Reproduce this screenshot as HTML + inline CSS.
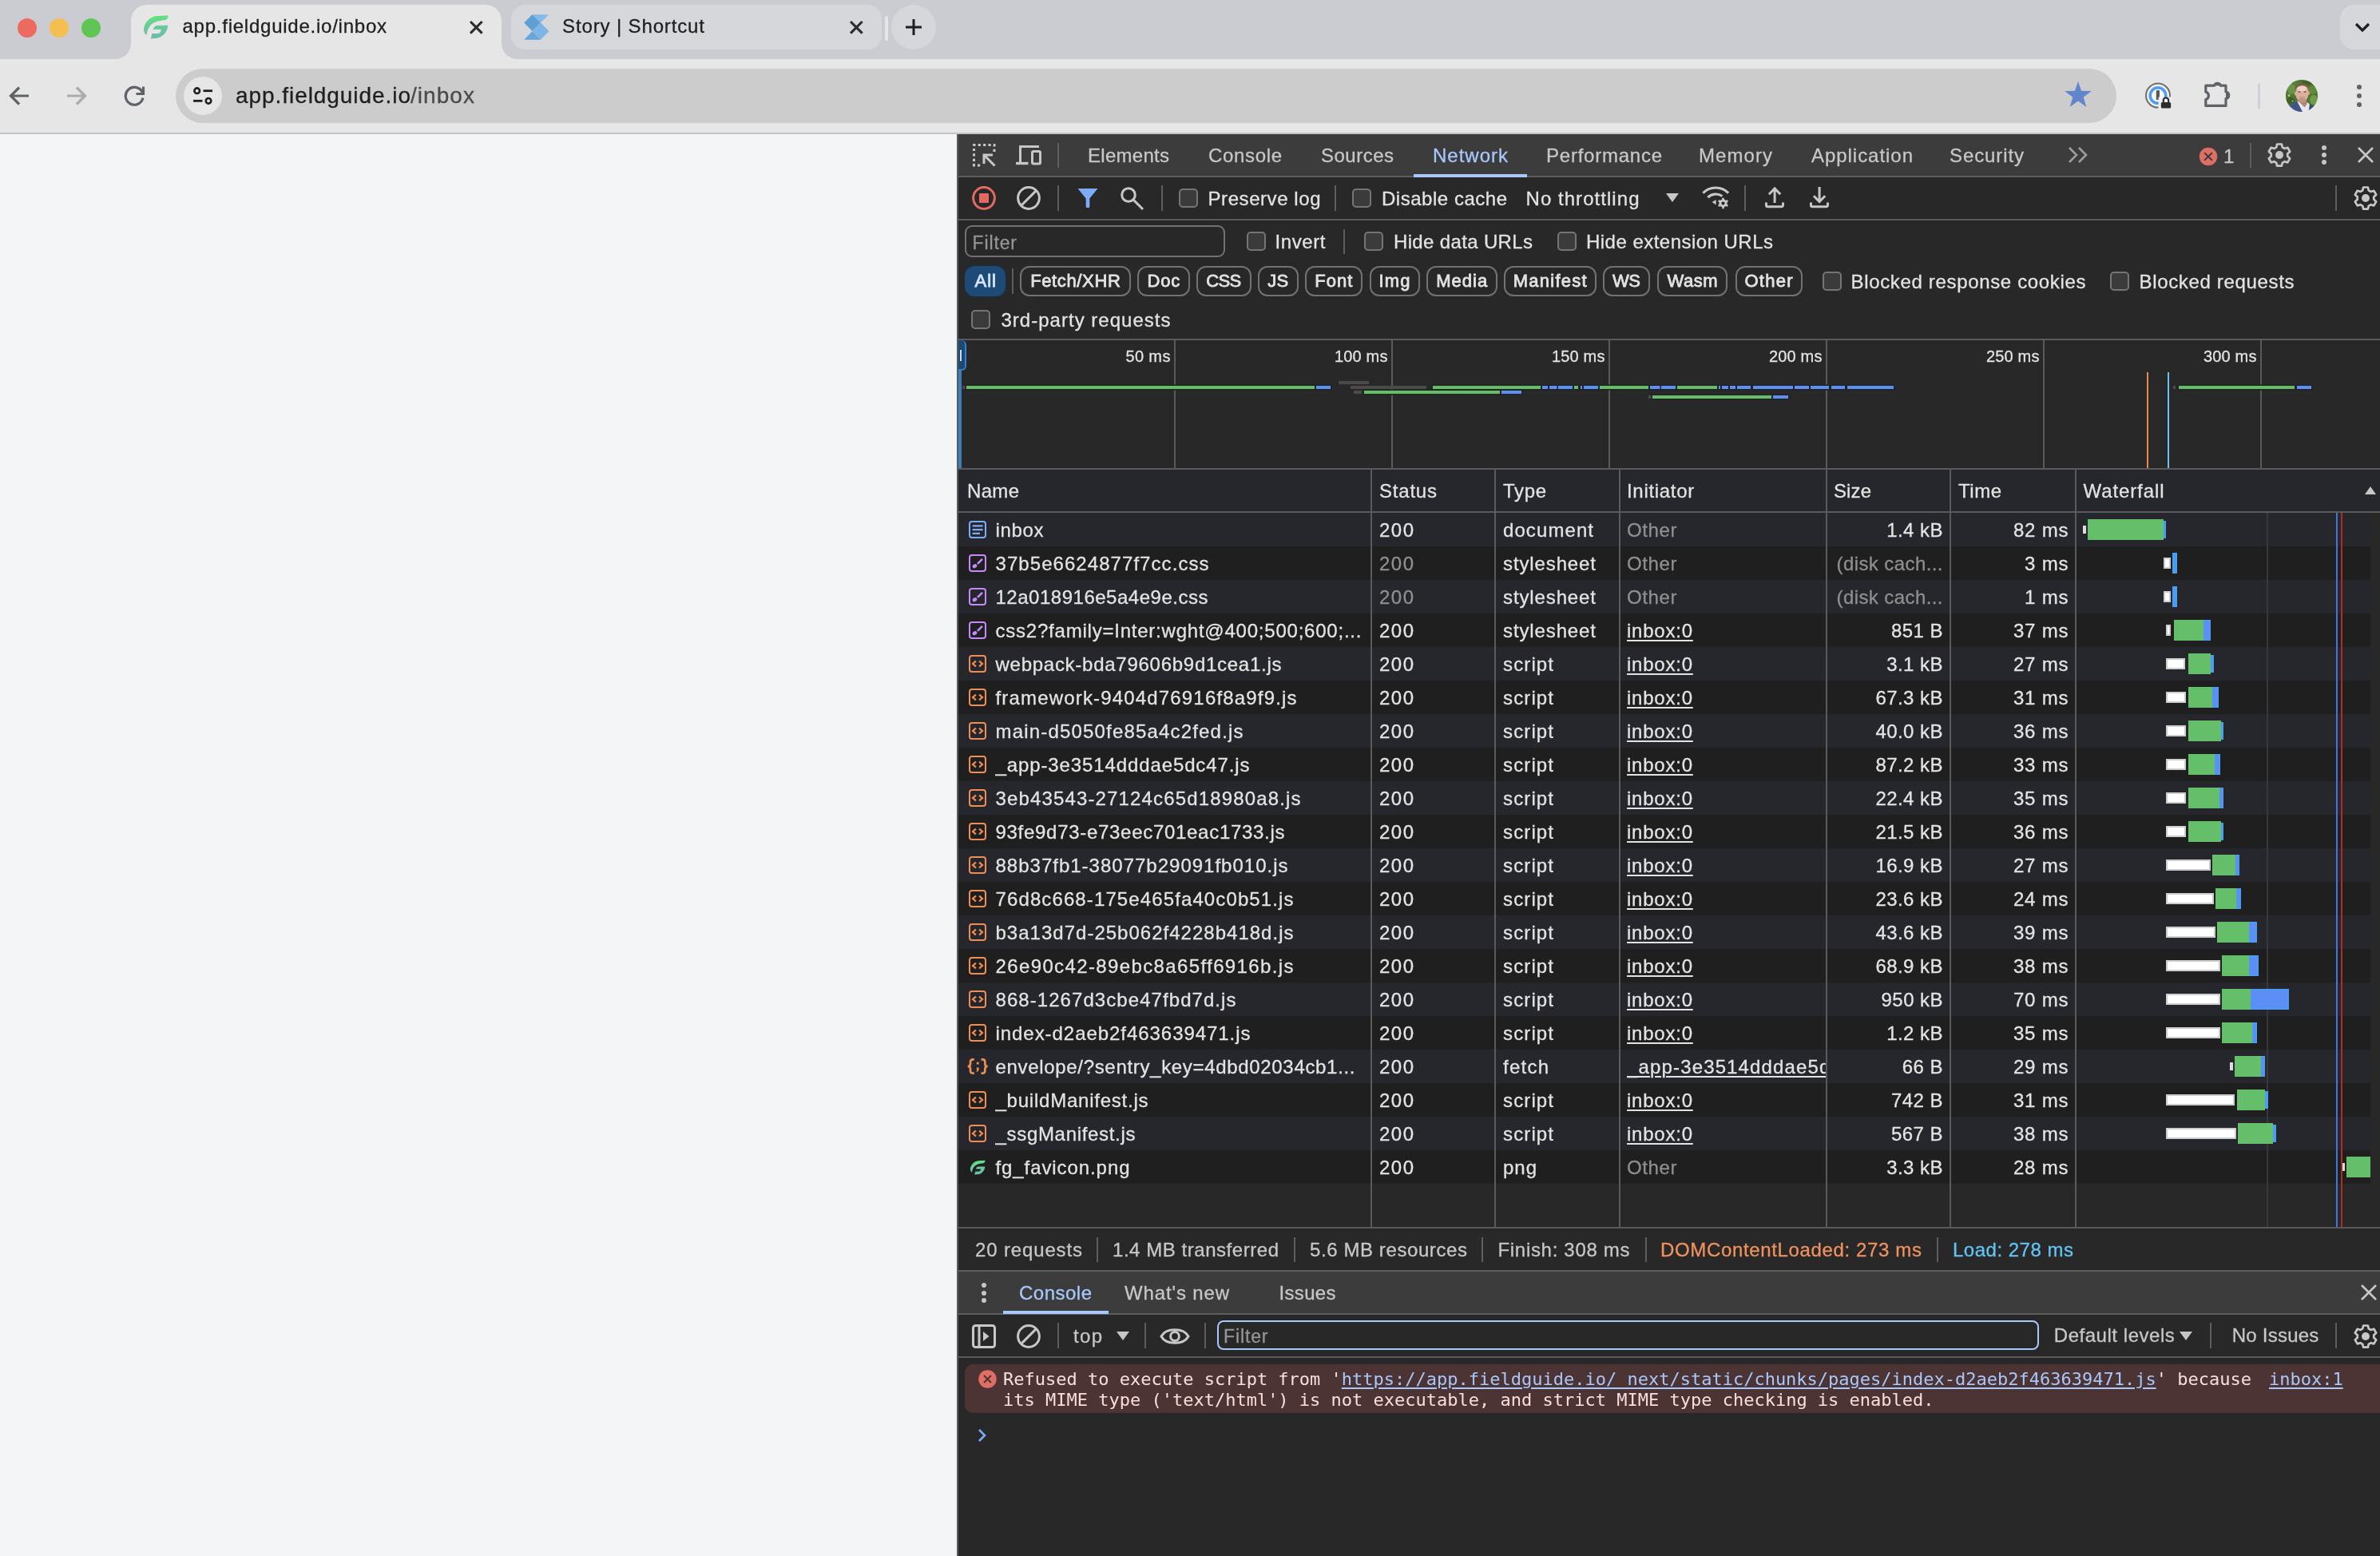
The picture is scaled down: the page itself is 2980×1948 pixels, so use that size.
<!DOCTYPE html>
<html lang="en"><head><meta charset="utf-8"><title>app.fieldguide.io/inbox</title><style>
html,body{margin:0;padding:0;}
body{width:2980px;height:1948px;position:relative;overflow:hidden;background:#f4f5f7;font-family:"Liberation Sans",sans-serif;}
body div,body span,body svg{position:absolute;}
#root{left:0;top:0;width:2980px;height:1948px;will-change:transform;}
span{white-space:pre;-webkit-text-stroke:0.3px currentColor;}
</style></head><body><div id="root">
<div style="left:0px;top:0px;width:2980px;height:74px;background:#cbccd1;"></div>
<div style="left:0px;top:74px;width:2980px;height:92px;background:#e6e6e6;"></div>
<div style="left:0px;top:166px;width:2980px;height:2px;background:#c4c4c6;"></div>
<div style="left:0px;top:168px;width:1198px;height:1780px;background:#f4f5f7;"></div>
<div style="left:1198px;top:168px;width:2px;height:1780px;background:#5a5a5a;"></div>
<div style="left:22px;top:23px;width:24px;height:24px;background:#ec6a5e;border-radius:50%;"></div>
<div style="left:62px;top:23px;width:24px;height:24px;background:#f4bf4f;border-radius:50%;"></div>
<div style="left:102px;top:23px;width:24px;height:24px;background:#61c554;border-radius:50%;"></div>
<div style="left:164px;top:6px;width:464px;height:68px;background:#e6e6e6;border-radius:20px 20px 0 0;"></div>
<svg style="left:144px;top:54px;" width="20" height="20" viewBox="0 0 20 20"><path d="M20 0 V20 H0 A20 20 0 0 0 20 0Z" fill="#e6e6e6"/></svg>
<svg style="left:628px;top:54px;" width="20" height="20" viewBox="0 0 20 20"><path d="M0 0 V20 H20 A20 20 0 0 1 0 0Z" fill="#e6e6e6"/></svg>
<span style="top:19.28px;font-size:24px;line-height:28.80px;color:#1f1f1f;letter-spacing:0.756px;left:228.5px;">app.fieldguide.io/inbox</span>
<div style="left:640px;top:6px;width:464px;height:56px;background:#d6d7db;border-radius:18px;"></div>
<span style="top:19.28px;font-size:24px;line-height:28.80px;color:#1f1f1f;letter-spacing:0.869px;left:704px;">Story | Shortcut</span>
<div style="left:1108px;top:19.5px;width:4px;height:31px;background:#e6e6e9;border-radius:2px;"></div>
<div style="left:1116px;top:6px;width:56px;height:56px;background:#d6d7db;border-radius:50%;"></div>
<div style="left:2930px;top:6px;width:70px;height:56px;background:#d6d7db;border-radius:18px;"></div>
<div style="left:220px;top:86px;width:2430px;height:68px;background:#cccccc;border-radius:34px;"></div>
<div style="left:230px;top:96px;width:48px;height:48px;background:#e6e6e6;border-radius:50%;"></div>
<span style="top:102.92px;font-size:28px;line-height:33.60px;color:#1f1f1f;letter-spacing:0.94px;left:295px;">app.fieldguide.io</span>
<span style="top:102.92px;font-size:28px;line-height:33.60px;color:#4a4a4a;letter-spacing:1.056px;left:514px;">/inbox</span>
<div style="left:2826.5px;top:104px;width:3.5px;height:31.5px;background:#d0d1d6;border-radius:2px;"></div>
<div style="left:1200px;top:168px;width:1780px;height:1780px;background:#282828;"></div>
<div style="left:1200px;top:168px;width:1780px;height:52px;background:#3c3c3c;"></div>
<div style="left:1200px;top:220px;width:1780px;height:2px;background:#5e5e5e;"></div>
<div style="left:1770px;top:218px;width:142px;height:4px;background:#a8c7fa;"></div>
<span style="top:180.88px;font-size:24px;line-height:28.80px;color:#c7c7c7;letter-spacing:0.279px;left:1362px;">Elements</span>
<span style="top:180.88px;font-size:24px;line-height:28.80px;color:#c7c7c7;letter-spacing:0.656px;left:1513px;">Console</span>
<span style="top:180.88px;font-size:24px;line-height:28.80px;color:#c7c7c7;letter-spacing:0.492px;left:1654px;">Sources</span>
<span style="top:180.88px;font-size:24px;line-height:28.80px;color:#a8c7fa;letter-spacing:0.995px;left:1794px;">Network</span>
<span style="top:180.88px;font-size:24px;line-height:28.80px;color:#c7c7c7;letter-spacing:0.761px;left:1936px;">Performance</span>
<span style="top:180.88px;font-size:24px;line-height:28.80px;color:#c7c7c7;letter-spacing:1.066px;left:2127px;">Memory</span>
<span style="top:180.88px;font-size:24px;line-height:28.80px;color:#c7c7c7;letter-spacing:0.958px;left:2268px;">Application</span>
<span style="top:180.88px;font-size:24px;line-height:28.80px;color:#c7c7c7;letter-spacing:0.9px;left:2441px;">Security</span>
<div style="left:1324px;top:179px;width:2px;height:31px;background:#5e5e5e;"></div>
<div style="left:2817px;top:179px;width:2px;height:31px;background:#5e5e5e;"></div>
<span style="top:182.38px;font-size:24px;line-height:28.80px;color:#c7c7c7;left:2784px;">1</span>
<div style="left:1200px;top:274px;width:1780px;height:2px;background:#5a5a5a;"></div>
<div style="left:1324px;top:232px;width:2px;height:32px;background:#5e5e5e;"></div>
<div style="left:1454px;top:232px;width:2px;height:32px;background:#5e5e5e;"></div>
<div style="left:1671px;top:232px;width:2px;height:32px;background:#5e5e5e;"></div>
<div style="left:2184px;top:232px;width:2px;height:32px;background:#5e5e5e;"></div>
<div style="left:2924px;top:232px;width:2px;height:32px;background:#5e5e5e;"></div>
<span style="top:235.08px;font-size:24px;line-height:28.80px;color:#e3e3e3;letter-spacing:0.57px;left:1512.5px;">Preserve log</span>
<span style="top:235.08px;font-size:24px;line-height:28.80px;color:#e3e3e3;letter-spacing:0.521px;left:1730px;">Disable cache</span>
<span style="top:235.08px;font-size:24px;line-height:28.80px;color:#e3e3e3;letter-spacing:1.049px;left:1910.5px;">No throttling</span>
<div style="left:1208px;top:282px;width:326px;height:40px;background:transparent;border:2px solid #727272;border-radius:9px;box-sizing:border-box;"></div>
<span style="top:290.96px;font-size:23px;line-height:27.60px;color:#959595;letter-spacing:0.875px;left:1217.5px;">Filter</span>
<span style="top:289.08px;font-size:24px;line-height:28.80px;color:#e3e3e3;letter-spacing:0.594px;left:1596.5px;">Invert</span>
<div style="left:1682px;top:287px;width:2px;height:31px;background:#5e5e5e;"></div>
<span style="top:289.08px;font-size:24px;line-height:28.80px;color:#e3e3e3;letter-spacing:0.352px;left:1745px;">Hide data URLs</span>
<span style="top:289.08px;font-size:24px;line-height:28.80px;color:#e3e3e3;letter-spacing:0.475px;left:1986px;">Hide extension URLs</span>
<div style="left:1208px;top:333px;width:51px;height:38px;background:#1e4a78;border-radius:12px;"></div>
<span style="top:339.05px;font-size:22px;line-height:26.40px;color:#d6e6ff;letter-spacing:1.023px;left:1220.5px;-webkit-text-stroke:0.8px #d6e6ff;">All</span>
<div style="left:1267px;top:336px;width:2px;height:32px;background:#5e5e5e;"></div>
<div style="left:1277px;top:333px;width:139px;height:38px;background:transparent;border:2px solid #727272;border-radius:12px;box-sizing:border-box;"></div>
<span style="top:339.05px;font-size:22px;line-height:26.40px;color:#e3e3e3;letter-spacing:0.626px;left:1290.2px;-webkit-text-stroke:0.8px #e3e3e3;">Fetch/XHR</span>
<div style="left:1424px;top:333px;width:65.70000000000005px;height:38px;background:transparent;border:2px solid #727272;border-radius:12px;box-sizing:border-box;"></div>
<span style="top:339.05px;font-size:22px;line-height:26.40px;color:#e3e3e3;letter-spacing:0.738px;left:1436.55px;-webkit-text-stroke:0.8px #e3e3e3;">Doc</span>
<div style="left:1498px;top:333px;width:68.5px;height:38px;background:transparent;border:2px solid #727272;border-radius:12px;box-sizing:border-box;"></div>
<span style="top:339.05px;font-size:22px;line-height:26.40px;color:#e3e3e3;letter-spacing:-0.625px;left:1510.25px;-webkit-text-stroke:0.8px #e3e3e3;">CSS</span>
<div style="left:1575px;top:333px;width:50.5px;height:38px;background:transparent;border:2px solid #727272;border-radius:12px;box-sizing:border-box;"></div>
<span style="top:339.05px;font-size:22px;line-height:26.40px;color:#e3e3e3;letter-spacing:0.312px;left:1587.25px;-webkit-text-stroke:0.8px #e3e3e3;">JS</span>
<div style="left:1634px;top:333px;width:71.5px;height:38px;background:transparent;border:2px solid #727272;border-radius:12px;box-sizing:border-box;"></div>
<span style="top:339.05px;font-size:22px;line-height:26.40px;color:#e3e3e3;letter-spacing:0.99px;left:1646.25px;-webkit-text-stroke:0.8px #e3e3e3;">Font</span>
<div style="left:1714.5px;top:333px;width:63.0px;height:38px;background:transparent;border:2px solid #727272;border-radius:12px;box-sizing:border-box;"></div>
<span style="top:339.05px;font-size:22px;line-height:26.40px;color:#e3e3e3;letter-spacing:1.156px;left:1726.5px;-webkit-text-stroke:0.8px #e3e3e3;">Img</span>
<div style="left:1786px;top:333px;width:88.5px;height:38px;background:transparent;border:2px solid #727272;border-radius:12px;box-sizing:border-box;"></div>
<span style="top:339.05px;font-size:22px;line-height:26.40px;color:#e3e3e3;letter-spacing:1.02px;left:1798.25px;-webkit-text-stroke:0.8px #e3e3e3;">Media</span>
<div style="left:1883px;top:333px;width:115.5px;height:38px;background:transparent;border:2px solid #727272;border-radius:12px;box-sizing:border-box;"></div>
<span style="top:339.05px;font-size:22px;line-height:26.40px;color:#e3e3e3;letter-spacing:1.263px;left:1894.75px;-webkit-text-stroke:0.8px #e3e3e3;">Manifest</span>
<div style="left:2007px;top:333px;width:59px;height:38px;background:transparent;border:2px solid #727272;border-radius:12px;box-sizing:border-box;"></div>
<span style="top:339.05px;font-size:22px;line-height:26.40px;color:#e3e3e3;letter-spacing:-0.453px;left:2019.0px;-webkit-text-stroke:0.8px #e3e3e3;">WS</span>
<div style="left:2075px;top:333px;width:88px;height:38px;background:transparent;border:2px solid #727272;border-radius:12px;box-sizing:border-box;"></div>
<span style="top:339.05px;font-size:22px;line-height:26.40px;color:#e3e3e3;letter-spacing:0.495px;left:2087.5px;-webkit-text-stroke:0.8px #e3e3e3;">Wasm</span>
<div style="left:2172.5px;top:333px;width:84.0px;height:38px;background:transparent;border:2px solid #727272;border-radius:12px;box-sizing:border-box;"></div>
<span style="top:339.05px;font-size:22px;line-height:26.40px;color:#e3e3e3;letter-spacing:1.242px;left:2184.5px;-webkit-text-stroke:0.8px #e3e3e3;">Other</span>
<span style="top:339.08px;font-size:24px;line-height:28.80px;color:#e3e3e3;letter-spacing:0.66px;left:2317.5px;">Blocked response cookies</span>
<span style="top:339.08px;font-size:24px;line-height:28.80px;color:#e3e3e3;letter-spacing:0.659px;left:2678.5px;">Blocked requests</span>
<span style="top:387.08px;font-size:24px;line-height:28.80px;color:#e3e3e3;letter-spacing:1.014px;left:1253.5px;">3rd-party requests</span>
<div style="left:1476px;top:236px;width:24px;height:24px;background:#3b3b3b;border:2px solid #757575;border-radius:5px;box-sizing:border-box;"></div>
<div style="left:1693px;top:236px;width:24px;height:24px;background:#3b3b3b;border:2px solid #757575;border-radius:5px;box-sizing:border-box;"></div>
<div style="left:1560.5px;top:290px;width:24px;height:24px;background:#3b3b3b;border:2px solid #757575;border-radius:5px;box-sizing:border-box;"></div>
<div style="left:1708px;top:290px;width:24px;height:24px;background:#3b3b3b;border:2px solid #757575;border-radius:5px;box-sizing:border-box;"></div>
<div style="left:1950px;top:290px;width:24px;height:24px;background:#3b3b3b;border:2px solid #757575;border-radius:5px;box-sizing:border-box;"></div>
<div style="left:2281.5px;top:340px;width:24px;height:24px;background:#3b3b3b;border:2px solid #757575;border-radius:5px;box-sizing:border-box;"></div>
<div style="left:2642px;top:340px;width:24px;height:24px;background:#3b3b3b;border:2px solid #757575;border-radius:5px;box-sizing:border-box;"></div>
<div style="left:1216px;top:388.2px;width:24px;height:24px;background:#3b3b3b;border:2px solid #757575;border-radius:5px;box-sizing:border-box;"></div>
<div style="left:1200px;top:424px;width:1780px;height:2px;background:#5a5a5a;"></div>
<div style="left:1200px;top:586px;width:1780px;height:2px;background:#5a5a5a;"></div>
<div style="left:1470px;top:426px;width:2px;height:160px;background:#5a5a5a;"></div>
<span style="top:434.43px;font-size:20px;line-height:24.00px;color:#e3e3e3;letter-spacing:0.383px;right:1514.22px;">50 ms</span>
<div style="left:1742px;top:426px;width:2px;height:160px;background:#5a5a5a;"></div>
<span style="top:434.43px;font-size:20px;line-height:24.00px;color:#e3e3e3;letter-spacing:0.181px;right:1242.42px;">100 ms</span>
<div style="left:2014px;top:426px;width:2px;height:160px;background:#5a5a5a;"></div>
<span style="top:434.43px;font-size:20px;line-height:24.00px;color:#e3e3e3;letter-spacing:0.181px;right:970.42px;">150 ms</span>
<div style="left:2286px;top:426px;width:2px;height:160px;background:#5a5a5a;"></div>
<span style="top:434.43px;font-size:20px;line-height:24.00px;color:#e3e3e3;letter-spacing:0.181px;right:698.42px;">200 ms</span>
<div style="left:2558px;top:426px;width:2px;height:160px;background:#5a5a5a;"></div>
<span style="top:434.43px;font-size:20px;line-height:24.00px;color:#e3e3e3;letter-spacing:0.181px;right:426.42px;">250 ms</span>
<div style="left:2830px;top:426px;width:2px;height:160px;background:#5a5a5a;"></div>
<span style="top:434.43px;font-size:20px;line-height:24.00px;color:#e3e3e3;letter-spacing:0.181px;right:154.42px;">300 ms</span>
<div style="left:1200px;top:426px;width:4px;height:160px;background:#3a7fba;"></div>
<div style="left:1200px;top:426px;width:10px;height:38px;background:#1d4875;border-radius:0 6px 6px 0;border:2px solid #3583c7;box-sizing:border-box;border-left:none;border-top:none;"></div>
<div style="left:1202px;top:438px;width:2px;height:14px;background:#c6d9ff;"></div>
<div style="left:1676.0px;top:477px;width:37.8px;height:4px;background:#4a4a4a;"></div>
<div style="left:1205.1px;top:483px;width:3.8px;height:4px;background:#4a4a4a;"></div>
<div style="left:1209.7px;top:483px;width:436.1px;height:4px;background:#65bf6a;box-shadow:0 0 0 1.5px #222222;"></div>
<div style="left:1647.6px;top:483px;width:18.2px;height:4px;background:#5b8ff5;box-shadow:0 0 0 1.5px #222222;"></div>
<div style="left:1691.1px;top:483px;width:94.6px;height:4px;background:#4a4a4a;"></div>
<div style="left:1794.4px;top:483px;width:134.3px;height:4px;background:#65bf6a;box-shadow:0 0 0 1.5px #222222;"></div>
<div style="left:1930.5px;top:483px;width:7.6px;height:4px;background:#5b8ff5;box-shadow:0 0 0 1.5px #222222;"></div>
<div style="left:1940.0px;top:483px;width:9.5px;height:4px;background:#5b8ff5;box-shadow:0 0 0 1.5px #222222;"></div>
<div style="left:1951.3px;top:483px;width:17.8px;height:4px;background:#5b8ff5;box-shadow:0 0 0 1.5px #222222;"></div>
<div style="left:1971.4px;top:483px;width:4.5px;height:4px;background:#65bf6a;box-shadow:0 0 0 1.5px #222222;"></div>
<div style="left:1978.6px;top:483px;width:2.6px;height:4px;background:#5b8ff5;box-shadow:0 0 0 1.5px #222222;"></div>
<div style="left:1983.1px;top:483px;width:18.2px;height:4px;background:#5b8ff5;box-shadow:0 0 0 1.5px #222222;"></div>
<div style="left:2003.2px;top:483px;width:60.5px;height:4px;background:#65bf6a;box-shadow:0 0 0 1.5px #222222;"></div>
<div style="left:2065.6px;top:483px;width:14.4px;height:4px;background:#5b8ff5;box-shadow:0 0 0 1.5px #222222;"></div>
<div style="left:2080.0px;top:483px;width:17.8px;height:4px;background:#5b8ff5;box-shadow:0 0 0 1.5px #222222;"></div>
<div style="left:2099.7px;top:483px;width:50.3px;height:4px;background:#65bf6a;box-shadow:0 0 0 1.5px #222222;"></div>
<div style="left:2151.9px;top:483px;width:1.9px;height:4px;background:#5b8ff5;box-shadow:0 0 0 1.5px #222222;"></div>
<div style="left:2155.6px;top:483px;width:8.3px;height:4px;background:#5b8ff5;box-shadow:0 0 0 1.5px #222222;"></div>
<div style="left:2166.2px;top:483px;width:6.4px;height:4px;background:#5b8ff5;box-shadow:0 0 0 1.5px #222222;"></div>
<div style="left:2174.6px;top:483px;width:17.8px;height:4px;background:#5b8ff5;box-shadow:0 0 0 1.5px #222222;"></div>
<div style="left:2194.6px;top:483px;width:50.3px;height:4px;background:#5b8ff5;box-shadow:0 0 0 1.5px #222222;"></div>
<div style="left:2247.2px;top:483px;width:17.4px;height:4px;background:#5b8ff5;box-shadow:0 0 0 1.5px #222222;"></div>
<div style="left:2266.8px;top:483px;width:23.1px;height:4px;background:#5b8ff5;box-shadow:0 0 0 1.5px #222222;"></div>
<div style="left:2292.6px;top:483px;width:17.8px;height:4px;background:#5b8ff5;box-shadow:0 0 0 1.5px #222222;"></div>
<div style="left:2312.6px;top:483px;width:58.6px;height:4px;background:#5b8ff5;box-shadow:0 0 0 1.5px #222222;"></div>
<div style="left:1694.9px;top:489px;width:10.2px;height:4px;background:#4a4a4a;"></div>
<div style="left:1708.2px;top:489px;width:169.4px;height:4px;background:#65bf6a;box-shadow:0 0 0 1.5px #222222;"></div>
<div style="left:1879.5px;top:489px;width:25.3px;height:4px;background:#5b8ff5;box-shadow:0 0 0 1.5px #222222;"></div>
<div style="left:2064.4px;top:495px;width:3.8px;height:4px;background:#4a4a4a;"></div>
<div style="left:2069.3px;top:495px;width:148.7px;height:4px;background:#65bf6a;box-shadow:0 0 0 1.5px #222222;"></div>
<div style="left:2220.3px;top:495px;width:18.5px;height:4px;background:#5b8ff5;box-shadow:0 0 0 1.5px #222222;"></div>
<div style="left:2688px;top:466px;width:2px;height:120px;background:#e8894f;"></div>
<div style="left:2714px;top:466px;width:2px;height:120px;background:#6ec1ee;"></div>
<div style="left:2721.1px;top:483px;width:3.0px;height:4px;background:#4a4a4a;"></div>
<div style="left:2727.9px;top:483px;width:145.6px;height:4px;background:#65bf6a;box-shadow:0 0 0 1.5px #222222;"></div>
<div style="left:2875.8px;top:483px;width:18.5px;height:4px;background:#5b8ff5;box-shadow:0 0 0 1.5px #222222;"></div>
<div style="left:1200px;top:588px;width:1780px;height:52px;background:#26272c;"></div>
<div style="left:1200px;top:640px;width:1780px;height:2px;background:#5a5a5a;"></div>
<span style="top:601.38px;font-size:24px;line-height:28.80px;color:#e3e3e3;letter-spacing:0.323px;left:1211px;">Name</span>
<span style="top:601.38px;font-size:24px;line-height:28.80px;color:#e3e3e3;letter-spacing:0.791px;left:1727px;">Status</span>
<span style="top:601.38px;font-size:24px;line-height:28.80px;color:#e3e3e3;letter-spacing:0.656px;left:1882px;">Type</span>
<span style="top:601.38px;font-size:24px;line-height:28.80px;color:#e3e3e3;letter-spacing:0.687px;left:2037px;">Initiator</span>
<span style="top:601.38px;font-size:24px;line-height:28.80px;color:#e3e3e3;letter-spacing:0.104px;left:2296px;">Size</span>
<span style="top:601.38px;font-size:24px;line-height:28.80px;color:#e3e3e3;letter-spacing:0.516px;left:2452px;">Time</span>
<span style="top:601.38px;font-size:24px;line-height:28.80px;color:#e3e3e3;letter-spacing:0.9px;left:2608.5px;">Waterfall</span>
<svg style="left:2960px;top:608px;" width="16" height="12" viewBox="0 0 16 12"><path d="M8 1 L15 11 H1Z" fill="#c7c7c7"/></svg>
<div style="left:1200px;top:642px;width:1768px;height:42px;background:#26272c;"></div>
<svg style="left:1213px;top:652px;" width="22" height="22" viewBox="0 0 22 22"><rect x="1" y="1" width="20" height="20" rx="3" fill="none" stroke="#7cacf8" stroke-width="2"/><path d="M4.6 6.4h13M4.6 11.1h13M4.6 15.9h9.4" stroke="#7cacf8" stroke-width="2.4" fill="none"/></svg>
<span style="top:649.88px;font-size:24px;line-height:28.80px;color:#e3e3e3;letter-spacing:0.656px;left:1246.5px;">inbox</span>
<span style="top:649.88px;font-size:24px;line-height:28.80px;color:#e3e3e3;letter-spacing:1.477px;left:1727px;">200</span>
<span style="top:649.88px;font-size:24px;line-height:28.80px;color:#e3e3e3;letter-spacing:1.085px;left:1882px;">document</span>
<span style="top:649.88px;font-size:24px;line-height:28.80px;color:#8f8f8f;letter-spacing:0.617px;left:2037px;">Other</span>
<span style="top:649.88px;font-size:24px;line-height:28.80px;color:#e3e3e3;letter-spacing:0.45px;right:547.05px;">1.4 kB</span>
<span style="top:649.88px;font-size:24px;line-height:28.80px;color:#e3e3e3;letter-spacing:0.8px;right:389.70px;">82 ms</span>
<div style="left:2608.4px;top:658px;width:3.8px;height:10px;background:#dcdcdc;z-index:1;"></div>
<div style="left:2707.6px;top:652px;width:4.8px;height:22px;background:#4a9df0;z-index:1;"></div>
<div style="left:2614.0px;top:650px;width:94.6px;height:26px;background:#65bf6a;z-index:2;"></div>
<div style="left:1200px;top:684px;width:1768px;height:42px;background:#1f1f1f;"></div>
<svg style="left:1213px;top:694px;" width="22" height="22" viewBox="0 0 22 22"><rect x="1" y="1" width="20" height="20" rx="3" fill="none" stroke="#c58af9" stroke-width="2"/><path d="M17 5.8 L11 11.8" stroke="#c58af9" stroke-width="2.6" fill="none"/><ellipse cx="7.5" cy="14.7" rx="3" ry="2.3" transform="rotate(-35 7.5 14.7)" fill="#c58af9"/></svg>
<span style="top:691.88px;font-size:24px;line-height:28.80px;color:#e3e3e3;letter-spacing:1.06px;left:1246.5px;">37b5e6624877f7cc.css</span>
<span style="top:691.88px;font-size:24px;line-height:28.80px;color:#8f8f8f;letter-spacing:1.477px;left:1727px;">200</span>
<span style="top:691.88px;font-size:24px;line-height:28.80px;color:#e3e3e3;letter-spacing:0.882px;left:1882px;">stylesheet</span>
<span style="top:691.88px;font-size:24px;line-height:28.80px;color:#8f8f8f;letter-spacing:0.617px;left:2037px;">Other</span>
<span style="top:691.88px;font-size:24px;line-height:28.80px;color:#8f8f8f;letter-spacing:0.413px;right:547.09px;">(disk cach...</span>
<span style="top:691.88px;font-size:24px;line-height:28.80px;color:#e3e3e3;letter-spacing:0.8px;right:389.70px;">3 ms</span>
<div style="left:2708.6px;top:698px;width:9.8px;height:14px;background:#ffffff;z-index:1;box-shadow:0 0 0 2px #cdcdcd inset;"></div>
<div style="left:2720.3px;top:692px;width:5.7px;height:26px;background:#4a9df0;z-index:1;"></div>
<div style="left:1200px;top:726px;width:1768px;height:42px;background:#26272c;"></div>
<svg style="left:1213px;top:736px;" width="22" height="22" viewBox="0 0 22 22"><rect x="1" y="1" width="20" height="20" rx="3" fill="none" stroke="#c58af9" stroke-width="2"/><path d="M17 5.8 L11 11.8" stroke="#c58af9" stroke-width="2.6" fill="none"/><ellipse cx="7.5" cy="14.7" rx="3" ry="2.3" transform="rotate(-35 7.5 14.7)" fill="#c58af9"/></svg>
<span style="top:733.88px;font-size:24px;line-height:28.80px;color:#e3e3e3;letter-spacing:0.514px;left:1246.5px;">12a018916e5a4e9e.css</span>
<span style="top:733.88px;font-size:24px;line-height:28.80px;color:#8f8f8f;letter-spacing:1.477px;left:1727px;">200</span>
<span style="top:733.88px;font-size:24px;line-height:28.80px;color:#e3e3e3;letter-spacing:0.882px;left:1882px;">stylesheet</span>
<span style="top:733.88px;font-size:24px;line-height:28.80px;color:#8f8f8f;letter-spacing:0.617px;left:2037px;">Other</span>
<span style="top:733.88px;font-size:24px;line-height:28.80px;color:#8f8f8f;letter-spacing:0.413px;right:547.09px;">(disk cach...</span>
<span style="top:733.88px;font-size:24px;line-height:28.80px;color:#e3e3e3;letter-spacing:0.8px;right:389.70px;">1 ms</span>
<div style="left:2708.6px;top:740px;width:9.8px;height:14px;background:#ffffff;z-index:1;box-shadow:0 0 0 2px #cdcdcd inset;"></div>
<div style="left:2720.3px;top:734px;width:5.7px;height:26px;background:#4a9df0;z-index:1;"></div>
<div style="left:1200px;top:768px;width:1768px;height:42px;background:#1f1f1f;"></div>
<svg style="left:1213px;top:778px;" width="22" height="22" viewBox="0 0 22 22"><rect x="1" y="1" width="20" height="20" rx="3" fill="none" stroke="#c58af9" stroke-width="2"/><path d="M17 5.8 L11 11.8" stroke="#c58af9" stroke-width="2.6" fill="none"/><ellipse cx="7.5" cy="14.7" rx="3" ry="2.3" transform="rotate(-35 7.5 14.7)" fill="#c58af9"/></svg>
<span style="top:775.88px;font-size:24px;line-height:28.80px;color:#e3e3e3;letter-spacing:0.776px;left:1246.5px;">css2?family=Inter:wght@400;500;600;...</span>
<span style="top:775.88px;font-size:24px;line-height:28.80px;color:#e3e3e3;letter-spacing:1.477px;left:1727px;">200</span>
<span style="top:775.88px;font-size:24px;line-height:28.80px;color:#e3e3e3;letter-spacing:0.882px;left:1882px;">stylesheet</span>
<span style="top:775.88px;font-size:24px;line-height:28.80px;color:#e3e3e3;letter-spacing:0.768px;left:2037px;text-decoration:underline;text-decoration-thickness:1.7px;text-underline-offset:3px;">inbox:0</span>
<span style="top:775.88px;font-size:24px;line-height:28.80px;color:#e3e3e3;letter-spacing:0.45px;right:547.05px;">851 B</span>
<span style="top:775.88px;font-size:24px;line-height:28.80px;color:#e3e3e3;letter-spacing:0.8px;right:389.70px;">37 ms</span>
<div style="left:2712.4px;top:782px;width:6.1px;height:14px;background:#ffffff;z-index:1;box-shadow:0 0 0 2px #cdcdcd inset;"></div>
<div style="left:2757.9px;top:776px;width:10.5px;height:26px;background:#5b8ff5;z-index:1;box-shadow:0 0 0 1.5px #4a9df0 inset;"></div>
<div style="left:2722.2px;top:776px;width:36.7px;height:26px;background:#65bf6a;z-index:2;"></div>
<div style="left:1200px;top:810px;width:1768px;height:42px;background:#26272c;"></div>
<svg style="left:1213px;top:820px;" width="22" height="22" viewBox="0 0 22 22"><rect x="1" y="1" width="20" height="20" rx="3" fill="none" stroke="#ee8e55" stroke-width="2"/><path d="M8.9 7.6 L5 11 L8.9 14.4 M13.1 7.6 L17 11 L13.1 14.4" stroke="#ee8e55" stroke-width="2.2" fill="none"/></svg>
<span style="top:817.88px;font-size:24px;line-height:28.80px;color:#e3e3e3;letter-spacing:0.733px;left:1246.5px;">webpack-bda79606b9d1cea1.js</span>
<span style="top:817.88px;font-size:24px;line-height:28.80px;color:#e3e3e3;letter-spacing:1.477px;left:1727px;">200</span>
<span style="top:817.88px;font-size:24px;line-height:28.80px;color:#e3e3e3;letter-spacing:1.131px;left:1882px;">script</span>
<span style="top:817.88px;font-size:24px;line-height:28.80px;color:#e3e3e3;letter-spacing:0.768px;left:2037px;text-decoration:underline;text-decoration-thickness:1.7px;text-underline-offset:3px;">inbox:0</span>
<span style="top:817.88px;font-size:24px;line-height:28.80px;color:#e3e3e3;letter-spacing:0.45px;right:547.05px;">3.1 kB</span>
<span style="top:817.88px;font-size:24px;line-height:28.80px;color:#e3e3e3;letter-spacing:0.8px;right:389.70px;">27 ms</span>
<div style="left:2712.4px;top:824px;width:23.8px;height:14px;background:#ffffff;z-index:1;box-shadow:0 0 0 2px #cdcdcd inset;"></div>
<div style="left:2767.4px;top:820px;width:4.8px;height:22px;background:#4a9df0;z-index:1;"></div>
<div style="left:2740.0px;top:818px;width:28.4px;height:26px;background:#65bf6a;z-index:2;"></div>
<div style="left:1200px;top:852px;width:1768px;height:42px;background:#1f1f1f;"></div>
<svg style="left:1213px;top:862px;" width="22" height="22" viewBox="0 0 22 22"><rect x="1" y="1" width="20" height="20" rx="3" fill="none" stroke="#ee8e55" stroke-width="2"/><path d="M8.9 7.6 L5 11 L8.9 14.4 M13.1 7.6 L17 11 L13.1 14.4" stroke="#ee8e55" stroke-width="2.2" fill="none"/></svg>
<span style="top:859.88px;font-size:24px;line-height:28.80px;color:#e3e3e3;letter-spacing:1.171px;left:1246.5px;">framework-9404d76916f8a9f9.js</span>
<span style="top:859.88px;font-size:24px;line-height:28.80px;color:#e3e3e3;letter-spacing:1.477px;left:1727px;">200</span>
<span style="top:859.88px;font-size:24px;line-height:28.80px;color:#e3e3e3;letter-spacing:1.131px;left:1882px;">script</span>
<span style="top:859.88px;font-size:24px;line-height:28.80px;color:#e3e3e3;letter-spacing:0.768px;left:2037px;text-decoration:underline;text-decoration-thickness:1.7px;text-underline-offset:3px;">inbox:0</span>
<span style="top:859.88px;font-size:24px;line-height:28.80px;color:#e3e3e3;letter-spacing:0.45px;right:547.05px;">67.3 kB</span>
<span style="top:859.88px;font-size:24px;line-height:28.80px;color:#e3e3e3;letter-spacing:0.8px;right:389.70px;">31 ms</span>
<div style="left:2712.4px;top:866px;width:25.0px;height:14px;background:#ffffff;z-index:1;box-shadow:0 0 0 2px #cdcdcd inset;"></div>
<div style="left:2769.2px;top:860px;width:8.9px;height:26px;background:#5b8ff5;z-index:1;box-shadow:0 0 0 1.5px #4a9df0 inset;"></div>
<div style="left:2740.0px;top:860px;width:30.3px;height:26px;background:#65bf6a;z-index:2;"></div>
<div style="left:1200px;top:894px;width:1768px;height:42px;background:#26272c;"></div>
<svg style="left:1213px;top:904px;" width="22" height="22" viewBox="0 0 22 22"><rect x="1" y="1" width="20" height="20" rx="3" fill="none" stroke="#ee8e55" stroke-width="2"/><path d="M8.9 7.6 L5 11 L8.9 14.4 M13.1 7.6 L17 11 L13.1 14.4" stroke="#ee8e55" stroke-width="2.2" fill="none"/></svg>
<span style="top:901.88px;font-size:24px;line-height:28.80px;color:#e3e3e3;letter-spacing:1.179px;left:1246.5px;">main-d5050fe85a4c2fed.js</span>
<span style="top:901.88px;font-size:24px;line-height:28.80px;color:#e3e3e3;letter-spacing:1.477px;left:1727px;">200</span>
<span style="top:901.88px;font-size:24px;line-height:28.80px;color:#e3e3e3;letter-spacing:1.131px;left:1882px;">script</span>
<span style="top:901.88px;font-size:24px;line-height:28.80px;color:#e3e3e3;letter-spacing:0.768px;left:2037px;text-decoration:underline;text-decoration-thickness:1.7px;text-underline-offset:3px;">inbox:0</span>
<span style="top:901.88px;font-size:24px;line-height:28.80px;color:#e3e3e3;letter-spacing:0.45px;right:547.05px;">40.0 kB</span>
<span style="top:901.88px;font-size:24px;line-height:28.80px;color:#e3e3e3;letter-spacing:0.8px;right:389.70px;">36 ms</span>
<div style="left:2712.4px;top:908px;width:25.0px;height:14px;background:#ffffff;z-index:1;box-shadow:0 0 0 2px #cdcdcd inset;"></div>
<div style="left:2779.5px;top:904px;width:4.8px;height:22px;background:#4a9df0;z-index:1;"></div>
<div style="left:2740.0px;top:902px;width:40.5px;height:26px;background:#65bf6a;z-index:2;"></div>
<div style="left:1200px;top:936px;width:1768px;height:42px;background:#1f1f1f;"></div>
<svg style="left:1213px;top:946px;" width="22" height="22" viewBox="0 0 22 22"><rect x="1" y="1" width="20" height="20" rx="3" fill="none" stroke="#ee8e55" stroke-width="2"/><path d="M8.9 7.6 L5 11 L8.9 14.4 M13.1 7.6 L17 11 L13.1 14.4" stroke="#ee8e55" stroke-width="2.2" fill="none"/></svg>
<span style="top:943.88px;font-size:24px;line-height:28.80px;color:#e3e3e3;letter-spacing:0.887px;left:1246.5px;">_app-3e3514dddae5dc47.js</span>
<span style="top:943.88px;font-size:24px;line-height:28.80px;color:#e3e3e3;letter-spacing:1.477px;left:1727px;">200</span>
<span style="top:943.88px;font-size:24px;line-height:28.80px;color:#e3e3e3;letter-spacing:1.131px;left:1882px;">script</span>
<span style="top:943.88px;font-size:24px;line-height:28.80px;color:#e3e3e3;letter-spacing:0.768px;left:2037px;text-decoration:underline;text-decoration-thickness:1.7px;text-underline-offset:3px;">inbox:0</span>
<span style="top:943.88px;font-size:24px;line-height:28.80px;color:#e3e3e3;letter-spacing:0.45px;right:547.05px;">87.2 kB</span>
<span style="top:943.88px;font-size:24px;line-height:28.80px;color:#e3e3e3;letter-spacing:0.8px;right:389.70px;">33 ms</span>
<div style="left:2712.4px;top:950px;width:25.0px;height:14px;background:#ffffff;z-index:1;box-shadow:0 0 0 2px #cdcdcd inset;"></div>
<div style="left:2771.9px;top:944px;width:8.2px;height:26px;background:#5b8ff5;z-index:1;box-shadow:0 0 0 1.5px #4a9df0 inset;"></div>
<div style="left:2740.0px;top:944px;width:32.9px;height:26px;background:#65bf6a;z-index:2;"></div>
<div style="left:1200px;top:978px;width:1768px;height:42px;background:#26272c;"></div>
<svg style="left:1213px;top:988px;" width="22" height="22" viewBox="0 0 22 22"><rect x="1" y="1" width="20" height="20" rx="3" fill="none" stroke="#ee8e55" stroke-width="2"/><path d="M8.9 7.6 L5 11 L8.9 14.4 M13.1 7.6 L17 11 L13.1 14.4" stroke="#ee8e55" stroke-width="2.2" fill="none"/></svg>
<span style="top:985.88px;font-size:24px;line-height:28.80px;color:#e3e3e3;letter-spacing:1.148px;left:1246.5px;">3eb43543-27124c65d18980a8.js</span>
<span style="top:985.88px;font-size:24px;line-height:28.80px;color:#e3e3e3;letter-spacing:1.477px;left:1727px;">200</span>
<span style="top:985.88px;font-size:24px;line-height:28.80px;color:#e3e3e3;letter-spacing:1.131px;left:1882px;">script</span>
<span style="top:985.88px;font-size:24px;line-height:28.80px;color:#e3e3e3;letter-spacing:0.768px;left:2037px;text-decoration:underline;text-decoration-thickness:1.7px;text-underline-offset:3px;">inbox:0</span>
<span style="top:985.88px;font-size:24px;line-height:28.80px;color:#e3e3e3;letter-spacing:0.45px;right:547.05px;">22.4 kB</span>
<span style="top:985.88px;font-size:24px;line-height:28.80px;color:#e3e3e3;letter-spacing:0.8px;right:389.70px;">35 ms</span>
<div style="left:2712.4px;top:992px;width:25.0px;height:14px;background:#ffffff;z-index:1;box-shadow:0 0 0 2px #cdcdcd inset;"></div>
<div style="left:2777.6px;top:986px;width:6.7px;height:26px;background:#5b8ff5;z-index:1;box-shadow:0 0 0 1.5px #4a9df0 inset;"></div>
<div style="left:2740.0px;top:986px;width:38.6px;height:26px;background:#65bf6a;z-index:2;"></div>
<div style="left:1200px;top:1020px;width:1768px;height:42px;background:#1f1f1f;"></div>
<svg style="left:1213px;top:1030px;" width="22" height="22" viewBox="0 0 22 22"><rect x="1" y="1" width="20" height="20" rx="3" fill="none" stroke="#ee8e55" stroke-width="2"/><path d="M8.9 7.6 L5 11 L8.9 14.4 M13.1 7.6 L17 11 L13.1 14.4" stroke="#ee8e55" stroke-width="2.2" fill="none"/></svg>
<span style="top:1027.88px;font-size:24px;line-height:28.80px;color:#e3e3e3;letter-spacing:0.705px;left:1246.5px;">93fe9d73-e73eec701eac1733.js</span>
<span style="top:1027.88px;font-size:24px;line-height:28.80px;color:#e3e3e3;letter-spacing:1.477px;left:1727px;">200</span>
<span style="top:1027.88px;font-size:24px;line-height:28.80px;color:#e3e3e3;letter-spacing:1.131px;left:1882px;">script</span>
<span style="top:1027.88px;font-size:24px;line-height:28.80px;color:#e3e3e3;letter-spacing:0.768px;left:2037px;text-decoration:underline;text-decoration-thickness:1.7px;text-underline-offset:3px;">inbox:0</span>
<span style="top:1027.88px;font-size:24px;line-height:28.80px;color:#e3e3e3;letter-spacing:0.45px;right:547.05px;">21.5 kB</span>
<span style="top:1027.88px;font-size:24px;line-height:28.80px;color:#e3e3e3;letter-spacing:0.8px;right:389.70px;">36 ms</span>
<div style="left:2712.4px;top:1034px;width:25.0px;height:14px;background:#ffffff;z-index:1;box-shadow:0 0 0 2px #cdcdcd inset;"></div>
<div style="left:2779.5px;top:1030px;width:4.8px;height:22px;background:#4a9df0;z-index:1;"></div>
<div style="left:2740.0px;top:1028px;width:40.5px;height:26px;background:#65bf6a;z-index:2;"></div>
<div style="left:1200px;top:1062px;width:1768px;height:42px;background:#26272c;"></div>
<svg style="left:1213px;top:1072px;" width="22" height="22" viewBox="0 0 22 22"><rect x="1" y="1" width="20" height="20" rx="3" fill="none" stroke="#ee8e55" stroke-width="2"/><path d="M8.9 7.6 L5 11 L8.9 14.4 M13.1 7.6 L17 11 L13.1 14.4" stroke="#ee8e55" stroke-width="2.2" fill="none"/></svg>
<span style="top:1069.88px;font-size:24px;line-height:28.80px;color:#e3e3e3;letter-spacing:1.001px;left:1246.5px;">88b37fb1-38077b29091fb010.js</span>
<span style="top:1069.88px;font-size:24px;line-height:28.80px;color:#e3e3e3;letter-spacing:1.477px;left:1727px;">200</span>
<span style="top:1069.88px;font-size:24px;line-height:28.80px;color:#e3e3e3;letter-spacing:1.131px;left:1882px;">script</span>
<span style="top:1069.88px;font-size:24px;line-height:28.80px;color:#e3e3e3;letter-spacing:0.768px;left:2037px;text-decoration:underline;text-decoration-thickness:1.7px;text-underline-offset:3px;">inbox:0</span>
<span style="top:1069.88px;font-size:24px;line-height:28.80px;color:#e3e3e3;letter-spacing:0.45px;right:547.05px;">16.9 kB</span>
<span style="top:1069.88px;font-size:24px;line-height:28.80px;color:#e3e3e3;letter-spacing:0.8px;right:389.70px;">27 ms</span>
<div style="left:2712.4px;top:1076px;width:55.2px;height:14px;background:#ffffff;z-index:1;box-shadow:0 0 0 2px #cdcdcd inset;"></div>
<div style="left:2797.6px;top:1070px;width:6.7px;height:26px;background:#5b8ff5;z-index:1;box-shadow:0 0 0 1.5px #4a9df0 inset;"></div>
<div style="left:2770.2px;top:1070px;width:28.4px;height:26px;background:#65bf6a;z-index:2;"></div>
<div style="left:1200px;top:1104px;width:1768px;height:42px;background:#1f1f1f;"></div>
<svg style="left:1213px;top:1114px;" width="22" height="22" viewBox="0 0 22 22"><rect x="1" y="1" width="20" height="20" rx="3" fill="none" stroke="#ee8e55" stroke-width="2"/><path d="M8.9 7.6 L5 11 L8.9 14.4 M13.1 7.6 L17 11 L13.1 14.4" stroke="#ee8e55" stroke-width="2.2" fill="none"/></svg>
<span style="top:1111.88px;font-size:24px;line-height:28.80px;color:#e3e3e3;letter-spacing:1.112px;left:1246.5px;">76d8c668-175e465fa40c0b51.js</span>
<span style="top:1111.88px;font-size:24px;line-height:28.80px;color:#e3e3e3;letter-spacing:1.477px;left:1727px;">200</span>
<span style="top:1111.88px;font-size:24px;line-height:28.80px;color:#e3e3e3;letter-spacing:1.131px;left:1882px;">script</span>
<span style="top:1111.88px;font-size:24px;line-height:28.80px;color:#e3e3e3;letter-spacing:0.768px;left:2037px;text-decoration:underline;text-decoration-thickness:1.7px;text-underline-offset:3px;">inbox:0</span>
<span style="top:1111.88px;font-size:24px;line-height:28.80px;color:#e3e3e3;letter-spacing:0.45px;right:547.05px;">23.6 kB</span>
<span style="top:1111.88px;font-size:24px;line-height:28.80px;color:#e3e3e3;letter-spacing:0.8px;right:389.70px;">24 ms</span>
<div style="left:2712.4px;top:1118px;width:59.8px;height:14px;background:#ffffff;z-index:1;box-shadow:0 0 0 2px #cdcdcd inset;"></div>
<div style="left:2799.5px;top:1112px;width:6.7px;height:26px;background:#5b8ff5;z-index:1;box-shadow:0 0 0 1.5px #4a9df0 inset;"></div>
<div style="left:2774.4px;top:1112px;width:26.1px;height:26px;background:#65bf6a;z-index:2;"></div>
<div style="left:1200px;top:1146px;width:1768px;height:42px;background:#26272c;"></div>
<svg style="left:1213px;top:1156px;" width="22" height="22" viewBox="0 0 22 22"><rect x="1" y="1" width="20" height="20" rx="3" fill="none" stroke="#ee8e55" stroke-width="2"/><path d="M8.9 7.6 L5 11 L8.9 14.4 M13.1 7.6 L17 11 L13.1 14.4" stroke="#ee8e55" stroke-width="2.2" fill="none"/></svg>
<span style="top:1153.88px;font-size:24px;line-height:28.80px;color:#e3e3e3;letter-spacing:1.013px;left:1246.5px;">b3a13d7d-25b062f4228b418d.js</span>
<span style="top:1153.88px;font-size:24px;line-height:28.80px;color:#e3e3e3;letter-spacing:1.477px;left:1727px;">200</span>
<span style="top:1153.88px;font-size:24px;line-height:28.80px;color:#e3e3e3;letter-spacing:1.131px;left:1882px;">script</span>
<span style="top:1153.88px;font-size:24px;line-height:28.80px;color:#e3e3e3;letter-spacing:0.768px;left:2037px;text-decoration:underline;text-decoration-thickness:1.7px;text-underline-offset:3px;">inbox:0</span>
<span style="top:1153.88px;font-size:24px;line-height:28.80px;color:#e3e3e3;letter-spacing:0.45px;right:547.05px;">43.6 kB</span>
<span style="top:1153.88px;font-size:24px;line-height:28.80px;color:#e3e3e3;letter-spacing:0.8px;right:389.70px;">39 ms</span>
<div style="left:2712.4px;top:1160px;width:61.6px;height:14px;background:#ffffff;z-index:1;box-shadow:0 0 0 2px #cdcdcd inset;"></div>
<div style="left:2815.4px;top:1154px;width:10.8px;height:26px;background:#5b8ff5;z-index:1;box-shadow:0 0 0 1.5px #4a9df0 inset;"></div>
<div style="left:2776.3px;top:1154px;width:40.1px;height:26px;background:#65bf6a;z-index:2;"></div>
<div style="left:1200px;top:1188px;width:1768px;height:42px;background:#1f1f1f;"></div>
<svg style="left:1213px;top:1198px;" width="22" height="22" viewBox="0 0 22 22"><rect x="1" y="1" width="20" height="20" rx="3" fill="none" stroke="#ee8e55" stroke-width="2"/><path d="M8.9 7.6 L5 11 L8.9 14.4 M13.1 7.6 L17 11 L13.1 14.4" stroke="#ee8e55" stroke-width="2.2" fill="none"/></svg>
<span style="top:1195.88px;font-size:24px;line-height:28.80px;color:#e3e3e3;letter-spacing:1.376px;left:1246.5px;">26e90c42-89ebc8a65ff6916b.js</span>
<span style="top:1195.88px;font-size:24px;line-height:28.80px;color:#e3e3e3;letter-spacing:1.477px;left:1727px;">200</span>
<span style="top:1195.88px;font-size:24px;line-height:28.80px;color:#e3e3e3;letter-spacing:1.131px;left:1882px;">script</span>
<span style="top:1195.88px;font-size:24px;line-height:28.80px;color:#e3e3e3;letter-spacing:0.768px;left:2037px;text-decoration:underline;text-decoration-thickness:1.7px;text-underline-offset:3px;">inbox:0</span>
<span style="top:1195.88px;font-size:24px;line-height:28.80px;color:#e3e3e3;letter-spacing:0.45px;right:547.05px;">68.9 kB</span>
<span style="top:1195.88px;font-size:24px;line-height:28.80px;color:#e3e3e3;letter-spacing:0.8px;right:389.70px;">38 ms</span>
<div style="left:2712.4px;top:1202px;width:67.3px;height:14px;background:#ffffff;z-index:1;box-shadow:0 0 0 2px #cdcdcd inset;"></div>
<div style="left:2815.4px;top:1196px;width:12.7px;height:26px;background:#5b8ff5;z-index:1;box-shadow:0 0 0 1.5px #4a9df0 inset;"></div>
<div style="left:2782.3px;top:1196px;width:34.0px;height:26px;background:#65bf6a;z-index:2;"></div>
<div style="left:1200px;top:1230px;width:1768px;height:42px;background:#26272c;"></div>
<svg style="left:1213px;top:1240px;" width="22" height="22" viewBox="0 0 22 22"><rect x="1" y="1" width="20" height="20" rx="3" fill="none" stroke="#ee8e55" stroke-width="2"/><path d="M8.9 7.6 L5 11 L8.9 14.4 M13.1 7.6 L17 11 L13.1 14.4" stroke="#ee8e55" stroke-width="2.2" fill="none"/></svg>
<span style="top:1237.88px;font-size:24px;line-height:28.80px;color:#e3e3e3;letter-spacing:1.065px;left:1246.5px;">868-1267d3cbe47fbd7d.js</span>
<span style="top:1237.88px;font-size:24px;line-height:28.80px;color:#e3e3e3;letter-spacing:1.477px;left:1727px;">200</span>
<span style="top:1237.88px;font-size:24px;line-height:28.80px;color:#e3e3e3;letter-spacing:1.131px;left:1882px;">script</span>
<span style="top:1237.88px;font-size:24px;line-height:28.80px;color:#e3e3e3;letter-spacing:0.768px;left:2037px;text-decoration:underline;text-decoration-thickness:1.7px;text-underline-offset:3px;">inbox:0</span>
<span style="top:1237.88px;font-size:24px;line-height:28.80px;color:#e3e3e3;letter-spacing:0.45px;right:547.05px;">950 kB</span>
<span style="top:1237.88px;font-size:24px;line-height:28.80px;color:#e3e3e3;letter-spacing:0.8px;right:389.70px;">70 ms</span>
<div style="left:2712.4px;top:1244px;width:67.3px;height:14px;background:#ffffff;z-index:1;box-shadow:0 0 0 2px #cdcdcd inset;"></div>
<div style="left:2817.3px;top:1238px;width:49.0px;height:26px;background:#5b8ff5;z-index:1;box-shadow:0 0 0 1.5px #4a9df0 inset;"></div>
<div style="left:2782.3px;top:1238px;width:35.9px;height:26px;background:#65bf6a;z-index:2;"></div>
<div style="left:1200px;top:1272px;width:1768px;height:42px;background:#1f1f1f;"></div>
<svg style="left:1213px;top:1282px;" width="22" height="22" viewBox="0 0 22 22"><rect x="1" y="1" width="20" height="20" rx="3" fill="none" stroke="#ee8e55" stroke-width="2"/><path d="M8.9 7.6 L5 11 L8.9 14.4 M13.1 7.6 L17 11 L13.1 14.4" stroke="#ee8e55" stroke-width="2.2" fill="none"/></svg>
<span style="top:1279.88px;font-size:24px;line-height:28.80px;color:#e3e3e3;letter-spacing:0.948px;left:1246.5px;">index-d2aeb2f463639471.js</span>
<span style="top:1279.88px;font-size:24px;line-height:28.80px;color:#e3e3e3;letter-spacing:1.477px;left:1727px;">200</span>
<span style="top:1279.88px;font-size:24px;line-height:28.80px;color:#e3e3e3;letter-spacing:1.131px;left:1882px;">script</span>
<span style="top:1279.88px;font-size:24px;line-height:28.80px;color:#e3e3e3;letter-spacing:0.768px;left:2037px;text-decoration:underline;text-decoration-thickness:1.7px;text-underline-offset:3px;">inbox:0</span>
<span style="top:1279.88px;font-size:24px;line-height:28.80px;color:#e3e3e3;letter-spacing:0.45px;right:547.05px;">1.2 kB</span>
<span style="top:1279.88px;font-size:24px;line-height:28.80px;color:#e3e3e3;letter-spacing:0.8px;right:389.70px;">35 ms</span>
<div style="left:2712.4px;top:1286px;width:67.3px;height:14px;background:#ffffff;z-index:1;box-shadow:0 0 0 2px #cdcdcd inset;"></div>
<div style="left:2819.5px;top:1280px;width:6.7px;height:26px;background:#5b8ff5;z-index:1;box-shadow:0 0 0 1.5px #4a9df0 inset;"></div>
<div style="left:2782.3px;top:1280px;width:38.2px;height:26px;background:#65bf6a;z-index:2;"></div>
<div style="left:1200px;top:1314px;width:1768px;height:42px;background:#26272c;"></div>
<svg style="left:1213px;top:1324px;overflow:visible;" width="28" height="22" viewBox="0 0 28 22"><g transform="translate(-3.4,0) scale(1.04,1)"><path d="M9.8 2.4 H8 Q5.2 2.4 5.2 5.2 V8 Q5.2 11 2 11 Q5.2 11 5.2 14 V16.8 Q5.2 19.6 8 19.6 H9.8 M18.2 2.4 H20 Q22.8 2.4 22.8 5.2 V8 Q22.8 11 26 11 Q22.8 11 22.8 14 V16.8 Q22.8 19.6 20 19.6 H18.2" stroke="#ee8e55" stroke-width="2.6" fill="none"/><rect x="12.7" y="5.6" width="2.7" height="2.9" fill="#ee8e55"/><path d="M12.7 12.4 h2.7 v3 l-1.6 2.4 h-1.5 l1 -2.6 h-0.6z" fill="#ee8e55"/></g></svg>
<span style="top:1321.88px;font-size:24px;line-height:28.80px;color:#e3e3e3;letter-spacing:0.676px;left:1246.5px;">envelope/?sentry_key=4dbd02034cb1...</span>
<span style="top:1321.88px;font-size:24px;line-height:28.80px;color:#e3e3e3;letter-spacing:1.477px;left:1727px;">200</span>
<span style="top:1321.88px;font-size:24px;line-height:28.80px;color:#e3e3e3;letter-spacing:1.242px;left:1882px;">fetch</span>
<div style="left:2037px;top:1314px;width:249px;height:42px;overflow:hidden;"><span style="left:0;top:7.88px;font-size:24px;line-height:28.8px;color:#e3e3e3;letter-spacing:1.15px;text-decoration:underline;text-decoration-thickness:1.7px;text-underline-offset:3px;">_app-3e3514dddae5dc47.js</span></div>
<span style="top:1321.88px;font-size:24px;line-height:28.80px;color:#e3e3e3;letter-spacing:0.45px;right:547.05px;">66 B</span>
<span style="top:1321.88px;font-size:24px;line-height:28.80px;color:#e3e3e3;letter-spacing:0.8px;right:389.70px;">29 ms</span>
<div style="left:2792.2px;top:1330px;width:3.8px;height:10px;background:#dcdcdc;z-index:1;"></div>
<div style="left:2829.8px;top:1322px;width:6.3px;height:26px;background:#5b8ff5;z-index:1;box-shadow:0 0 0 1.5px #4a9df0 inset;"></div>
<div style="left:2798.2px;top:1322px;width:32.5px;height:26px;background:#65bf6a;z-index:2;"></div>
<div style="left:1200px;top:1356px;width:1768px;height:42px;background:#1f1f1f;"></div>
<svg style="left:1213px;top:1366px;" width="22" height="22" viewBox="0 0 22 22"><rect x="1" y="1" width="20" height="20" rx="3" fill="none" stroke="#ee8e55" stroke-width="2"/><path d="M8.9 7.6 L5 11 L8.9 14.4 M13.1 7.6 L17 11 L13.1 14.4" stroke="#ee8e55" stroke-width="2.2" fill="none"/></svg>
<span style="top:1363.88px;font-size:24px;line-height:28.80px;color:#e3e3e3;letter-spacing:0.765px;left:1246.5px;">_buildManifest.js</span>
<span style="top:1363.88px;font-size:24px;line-height:28.80px;color:#e3e3e3;letter-spacing:1.477px;left:1727px;">200</span>
<span style="top:1363.88px;font-size:24px;line-height:28.80px;color:#e3e3e3;letter-spacing:1.131px;left:1882px;">script</span>
<span style="top:1363.88px;font-size:24px;line-height:28.80px;color:#e3e3e3;letter-spacing:0.768px;left:2037px;text-decoration:underline;text-decoration-thickness:1.7px;text-underline-offset:3px;">inbox:0</span>
<span style="top:1363.88px;font-size:24px;line-height:28.80px;color:#e3e3e3;letter-spacing:0.45px;right:547.05px;">742 B</span>
<span style="top:1363.88px;font-size:24px;line-height:28.80px;color:#e3e3e3;letter-spacing:0.8px;right:389.70px;">31 ms</span>
<div style="left:2712.4px;top:1370px;width:85.5px;height:14px;background:#ffffff;z-index:1;box-shadow:0 0 0 2px #cdcdcd inset;"></div>
<div style="left:2835.1px;top:1366px;width:5.2px;height:22px;background:#4a9df0;z-index:1;"></div>
<div style="left:2800.5px;top:1364px;width:35.6px;height:26px;background:#65bf6a;z-index:2;"></div>
<div style="left:1200px;top:1398px;width:1768px;height:42px;background:#26272c;"></div>
<svg style="left:1213px;top:1408px;" width="22" height="22" viewBox="0 0 22 22"><rect x="1" y="1" width="20" height="20" rx="3" fill="none" stroke="#ee8e55" stroke-width="2"/><path d="M8.9 7.6 L5 11 L8.9 14.4 M13.1 7.6 L17 11 L13.1 14.4" stroke="#ee8e55" stroke-width="2.2" fill="none"/></svg>
<span style="top:1405.88px;font-size:24px;line-height:28.80px;color:#e3e3e3;letter-spacing:0.685px;left:1246.5px;">_ssgManifest.js</span>
<span style="top:1405.88px;font-size:24px;line-height:28.80px;color:#e3e3e3;letter-spacing:1.477px;left:1727px;">200</span>
<span style="top:1405.88px;font-size:24px;line-height:28.80px;color:#e3e3e3;letter-spacing:1.131px;left:1882px;">script</span>
<span style="top:1405.88px;font-size:24px;line-height:28.80px;color:#e3e3e3;letter-spacing:0.768px;left:2037px;text-decoration:underline;text-decoration-thickness:1.7px;text-underline-offset:3px;">inbox:0</span>
<span style="top:1405.88px;font-size:24px;line-height:28.80px;color:#e3e3e3;letter-spacing:0.45px;right:547.05px;">567 B</span>
<span style="top:1405.88px;font-size:24px;line-height:28.80px;color:#e3e3e3;letter-spacing:0.8px;right:389.70px;">38 ms</span>
<div style="left:2712.4px;top:1412px;width:87.4px;height:14px;background:#ffffff;z-index:1;box-shadow:0 0 0 2px #cdcdcd inset;"></div>
<div style="left:2845.3px;top:1408px;width:5.2px;height:22px;background:#4a9df0;z-index:1;"></div>
<div style="left:2802.4px;top:1406px;width:43.9px;height:26px;background:#65bf6a;z-index:2;"></div>
<div style="left:1200px;top:1440px;width:1768px;height:42px;background:#1f1f1f;"></div>
<svg style="left:1213.5px;top:1451.5px;" width="20" height="19.5" viewBox="0 0 32 32"><defs><linearGradient id="fgg2" x1="0" y1="0" x2="0" y2="1"><stop offset="0" stop-color="#62e27c"/><stop offset="0.5" stop-color="#68c99c"/><stop offset="1" stop-color="#6fbaae"/></linearGradient></defs><path fill="url(#fgg2)" d="M31.8 1.2 C24 1.6 18 1.8 15 2.3 C8 4 2 11 1 18 C0.8 21.5 2 24 4.5 26 C5.5 18 9 12 15.1 9.7 C19 8.2 24 7.5 28 7.1 C30 6.5 31.5 4 31.8 1.2Z M12.5 18.7 C13.5 16.5 15 14.4 17.5 14.1 L31.2 13.85 C31 20 27 27 19 29.6 C16 30.3 13 30.2 10.9 30.2 L9.96 31 L11.1 24.1 L19 23.9 C21.5 23.5 22.6 21 22.8 18.9Z"/></svg>
<span style="top:1447.88px;font-size:24px;line-height:28.80px;color:#e3e3e3;letter-spacing:0.913px;left:1246.5px;">fg_favicon.png</span>
<span style="top:1447.88px;font-size:24px;line-height:28.80px;color:#e3e3e3;letter-spacing:1.477px;left:1727px;">200</span>
<span style="top:1447.88px;font-size:24px;line-height:28.80px;color:#e3e3e3;letter-spacing:0.977px;left:1882px;">png</span>
<span style="top:1447.88px;font-size:24px;line-height:28.80px;color:#8f8f8f;letter-spacing:0.617px;left:2037px;">Other</span>
<span style="top:1447.88px;font-size:24px;line-height:28.80px;color:#e3e3e3;letter-spacing:0.45px;right:547.05px;">3.3 kB</span>
<span style="top:1447.88px;font-size:24px;line-height:28.80px;color:#e3e3e3;letter-spacing:0.8px;right:389.70px;">28 ms</span>
<div style="left:2933.3px;top:1456px;width:2.6px;height:10px;background:#dcdcdc;z-index:1;"></div>
<div style="left:2938.2px;top:1448px;width:29.9px;height:26px;background:#65bf6a;z-index:2;"></div>
<div style="left:1716px;top:588px;width:2px;height:948px;background:#5a5a5a;"></div>
<div style="left:1871px;top:588px;width:2px;height:948px;background:#5a5a5a;"></div>
<div style="left:2026.5px;top:588px;width:2px;height:948px;background:#5a5a5a;"></div>
<div style="left:2286px;top:588px;width:2px;height:948px;background:#5a5a5a;"></div>
<div style="left:2441px;top:588px;width:2px;height:948px;background:#5a5a5a;"></div>
<div style="left:2598px;top:588px;width:2px;height:948px;background:#5a5a5a;"></div>
<div style="left:2838px;top:642px;width:2px;height:894px;background:#36383e;"></div>
<div style="left:2925px;top:642px;width:2px;height:894px;background:#3b78e0;"></div>
<div style="left:2931px;top:642px;width:2px;height:894px;background:#b32a20;"></div>
<div style="left:1200px;top:1536px;width:1780px;height:2px;background:#5a5a5a;"></div>
<span style="top:1551.08px;font-size:24px;line-height:28.80px;color:#c7c7c7;letter-spacing:0.858px;left:1221px;">20 requests</span>
<span style="top:1551.08px;font-size:24px;line-height:28.80px;color:#c7c7c7;letter-spacing:0.544px;left:1393px;">1.4 MB transferred</span>
<span style="top:1551.08px;font-size:24px;line-height:28.80px;color:#c7c7c7;letter-spacing:0.595px;left:1640px;">5.6 MB resources</span>
<span style="top:1551.08px;font-size:24px;line-height:28.80px;color:#c7c7c7;letter-spacing:0.688px;left:1875.5px;">Finish: 308 ms</span>
<span style="top:1551.08px;font-size:24px;line-height:28.80px;color:#f0925f;letter-spacing:0.644px;left:2079px;">DOMContentLoaded: 273 ms</span>
<span style="top:1551.08px;font-size:24px;line-height:28.80px;color:#62c4f4;letter-spacing:0.506px;left:2445px;">Load: 278 ms</span>
<div style="left:1373px;top:1549px;width:2px;height:31px;background:#5e5e5e;"></div>
<div style="left:1620px;top:1549px;width:2px;height:31px;background:#5e5e5e;"></div>
<div style="left:1855px;top:1549px;width:2px;height:31px;background:#5e5e5e;"></div>
<div style="left:2059.5px;top:1549px;width:2px;height:31px;background:#5e5e5e;"></div>
<div style="left:2425px;top:1549px;width:2px;height:31px;background:#5e5e5e;"></div>
<div style="left:1200px;top:1590px;width:1780px;height:2px;background:#5e5e5e;"></div>
<div style="left:1200px;top:1592px;width:1780px;height:52px;background:#3c3c3c;"></div>
<div style="left:1200px;top:1644px;width:1780px;height:2px;background:#5e5e5e;"></div>
<div style="left:1256px;top:1641px;width:132px;height:4px;background:#a8c7fa;"></div>
<span style="top:1605.08px;font-size:24px;line-height:28.80px;color:#a8c7fa;letter-spacing:0.49px;left:1276px;">Console</span>
<span style="top:1605.08px;font-size:24px;line-height:28.80px;color:#c7c7c7;letter-spacing:0.856px;left:1408px;">What&#x27;s new</span>
<span style="top:1605.08px;font-size:24px;line-height:28.80px;color:#c7c7c7;letter-spacing:0.325px;left:1601.5px;">Issues</span>
<div style="left:1200px;top:1698px;width:1780px;height:2px;background:#5a5a5a;"></div>
<div style="left:1324px;top:1656px;width:2px;height:32px;background:#5e5e5e;"></div>
<div style="left:1433px;top:1656px;width:2px;height:32px;background:#5e5e5e;"></div>
<div style="left:1508px;top:1656px;width:2px;height:32px;background:#5e5e5e;"></div>
<div style="left:2767px;top:1656px;width:2px;height:32px;background:#5e5e5e;"></div>
<div style="left:2924px;top:1656px;width:2px;height:32px;background:#5e5e5e;"></div>
<span style="top:1658.88px;font-size:24px;line-height:28.80px;color:#c7c7c7;letter-spacing:1.312px;left:1344px;">top</span>
<div style="left:1523.5px;top:1653px;width:1029.5px;height:37px;background:transparent;border:2px solid #a8c7fa;border-radius:8px;box-sizing:border-box;"></div>
<span style="top:1660.46px;font-size:23px;line-height:27.60px;color:#959595;letter-spacing:0.875px;left:1532px;">Filter</span>
<span style="top:1658.48px;font-size:24px;line-height:28.80px;color:#c7c7c7;letter-spacing:0.532px;left:2571.8px;">Default levels</span>
<span style="top:1658.48px;font-size:24px;line-height:28.80px;color:#c7c7c7;letter-spacing:0.223px;left:2794.8px;">No Issues</span>
<div style="left:1208px;top:1708px;width:1790px;height:61px;background:#4b3433;border-radius:10px;"></div>
<span style="top:1714.05px;font-size:22px;line-height:26.40px;color:#f9dedc;font-family:'DejaVu Sans Mono', 'Liberation Mono', monospace;-webkit-text-stroke:0;left:1256px;">Refused to execute script from &#x27;</span>
<span style="top:1714.05px;font-size:22px;line-height:26.40px;color:#a8c7fa;font-family:'DejaVu Sans Mono', 'Liberation Mono', monospace;-webkit-text-stroke:0;left:1679.84px;text-decoration:underline;text-decoration-thickness:1.7px;text-underline-offset:3px;">https://app.fieldguide.io/_next/static/chunks/pages/index-d2aeb2f463639471.js</span>
<span style="top:1714.05px;font-size:22px;line-height:26.40px;color:#f9dedc;font-family:'DejaVu Sans Mono', 'Liberation Mono', monospace;-webkit-text-stroke:0;left:2699.705px;">&#x27; because</span>
<span style="top:1714.05px;font-size:22px;line-height:26.40px;color:#a8c7fa;font-family:'DejaVu Sans Mono', 'Liberation Mono', monospace;-webkit-text-stroke:0;left:2841px;text-decoration:underline;text-decoration-thickness:1.7px;text-underline-offset:3px;">inbox:1</span>
<span style="top:1739.85px;font-size:22px;line-height:26.40px;color:#f9dedc;font-family:'DejaVu Sans Mono', 'Liberation Mono', monospace;-webkit-text-stroke:0;left:1256px;">its MIME type (&#x27;text/html&#x27;) is not executable, and strict MIME type checking is enabled.</span>
<svg style="left:1222px;top:1785px;" width="16" height="24" viewBox="0 0 16 24"><path d="M4 5 L11 12 L4 19" stroke="#7cacf8" stroke-width="2.6" fill="none"/></svg>
<svg style="left:179px;top:18px;" width="32" height="32" viewBox="0 0 32 32"><defs><linearGradient id="fgg1" x1="0" y1="0" x2="0" y2="1"><stop offset="0" stop-color="#62e27c"/><stop offset="0.5" stop-color="#68c99c"/><stop offset="1" stop-color="#6fbaae"/></linearGradient></defs><path fill="url(#fgg1)" d="M31.8 1.2 C24 1.6 18 1.8 15 2.3 C8 4 2 11 1 18 C0.8 21.5 2 24 4.5 26 C5.5 18 9 12 15.1 9.7 C19 8.2 24 7.5 28 7.1 C30 6.5 31.5 4 31.8 1.2Z M12.5 18.7 C13.5 16.5 15 14.4 17.5 14.1 L31.2 13.85 C31 20 27 27 19 29.6 C16 30.3 13 30.2 10.9 30.2 L9.96 31 L11.1 24.1 L19 23.9 C21.5 23.5 22.6 21 22.8 18.9Z"/></svg>
<svg style="left:655px;top:17px;" width="34" height="34" viewBox="0 0 34 34"><path d="M11.2 1.2 H32.4 L21.8 11.3Z" fill="#82bbec"/><path d="M11.2 1.2 L21.8 11.3 L11.5 21.9 L1.2 11.5Z" fill="#5f9fd6"/><path d="M21.8 11.3 L32.4 22.2 L21.8 32.8 L11.5 21.9Z" fill="#7db5e6"/><path d="M11.5 21.9 L21.8 32.8 H1.2Z" fill="#66a6dc"/></svg>
<svg style="left:586.7px;top:24.7px;" width="18.6" height="18.6" viewBox="0 0 18.6 18.6"><path d="M2 2 L16.6 16.6 M16.6 2 L2 16.6" stroke="#2b2c30" stroke-width="3.1" fill="none"/></svg>
<svg style="left:1062.7px;top:24.7px;" width="18.6" height="18.6" viewBox="0 0 18.6 18.6"><path d="M2 2 L16.6 16.6 M16.6 2 L2 16.6" stroke="#2b2c30" stroke-width="3.1" fill="none"/></svg>
<svg style="left:1132px;top:22px;" width="24" height="24" viewBox="0 0 24 24"><path d="M12 2 V22 M2 12 H22" stroke="#1f1f1f" stroke-width="3" fill="none"/></svg>
<svg style="left:2946px;top:24px;" width="24" height="20" viewBox="0 0 24 20"><path d="M4 6 L12 14 L20 6" stroke="#1f1f1f" stroke-width="3.2" fill="none"/></svg>
<svg style="left:10px;top:106px;" width="28" height="28" viewBox="0 0 28 28"><path d="M26 14 H4 M14 3.5 L3.5 14 L14 24.5" stroke="#5f6368" stroke-width="3.2" fill="none"/></svg>
<svg style="left:82px;top:106px;" width="28" height="28" viewBox="0 0 28 28"><path d="M2 14 H24 M14 3.5 L24.5 14 L14 24.5" stroke="#a9abaf" stroke-width="3.2" fill="none"/></svg>
<svg style="left:154px;top:106px;" width="28" height="28" viewBox="0 0 28 28"><path d="M24.2 9.5 A11 11 0 1 0 25 16.5" stroke="#5f6368" stroke-width="3.2" fill="none"/><path d="M25.5 2.5 V11.5 H16.5" stroke="#5f6368" stroke-width="3.2" fill="none"/></svg>
<svg style="left:238px;top:104px;" width="32" height="32" viewBox="0 0 32 32"><circle cx="8.7" cy="9.7" r="3.3" fill="none" stroke="#1f1f1f" stroke-width="2.6"/><path d="M16.5 9.7 H28" stroke="#1f1f1f" stroke-width="2.8"/><path d="M4 22.3 H15.5" stroke="#1f1f1f" stroke-width="2.8"/><circle cx="23" cy="22.3" r="3.3" fill="none" stroke="#1f1f1f" stroke-width="2.6"/></svg>
<svg style="left:2584px;top:100px;" width="36" height="38" viewBox="0 0 36 38"><polygon points="18.00,2.00 22.11,13.84 34.64,14.09 24.66,21.66 28.29,33.66 18.00,26.50 7.71,33.66 11.34,21.66 1.36,14.09 13.89,13.84" fill="#6385cb"/></svg>
<svg style="left:2684px;top:102px;" width="38" height="38" viewBox="0 0 38 38"><circle cx="18" cy="17.6" r="15" fill="#f4f4f4" stroke="#6d6d6d" stroke-width="2"/><circle cx="18" cy="17.6" r="9.8" fill="#f7f7f7" stroke="#4d9df6" stroke-width="3.6"/><rect x="15.8" y="11" width="4.2" height="12" rx="0.8" fill="#5a5a5a"/><rect x="18.7" y="19.4" width="16" height="14.8" fill="#efefef"/><rect x="21.8" y="26" width="12.4" height="7.6" rx="1.6" fill="#2d2d2d"/><path d="M24.8 26.5 V23.6 A3.2 3.2 0 0 1 31.2 23.6 V26.5" stroke="#2d2d2d" stroke-width="2.2" fill="none"/></svg>
<svg style="left:2757px;top:99px;" width="38" height="38" viewBox="0 0 38 38"><path d="M4.8 8.2 H15.5 A4.2 4.2 0 0 1 23.5 8.2 H30 V16 A4.3 4.3 0 0 1 30 24.5 V33.4 H4.8 V25.6 A5 5 0 0 0 4.8 16Z" fill="none" stroke="#5f6368" stroke-width="3.2" stroke-linejoin="round"/><path d="M15.2 8.2 A4.4 4.4 0 0 1 23.8 8.2Z M30 15.8 A4.5 4.5 0 0 1 30 24.7Z" fill="#5f6368"/></svg>
<svg style="left:2861px;top:99px;" width="42" height="42" viewBox="0 0 42 42"><defs><clipPath id="avc"><circle cx="21" cy="20.9" r="20.1"/></clipPath><filter id="avb" x="-10%" y="-10%" width="120%" height="120%"><feGaussianBlur stdDeviation="0.55"/></filter></defs><g clip-path="url(#avc)"><g filter="url(#avb)"><rect x="-4" y="-4" width="50" height="50" fill="#4f7430"/><ellipse cx="8" cy="12" rx="5" ry="7" fill="#6b9446"/><ellipse cx="34" cy="14" rx="6" ry="5" fill="#5f8a3c"/><ellipse cx="36" cy="26" rx="5" ry="6" fill="#719a4c"/><ellipse cx="7" cy="27" rx="5" ry="4" fill="#3f5f25"/><ellipse cx="28" cy="4.5" rx="7" ry="3" fill="#3f6126"/><ellipse cx="13" cy="5" rx="5" ry="3" fill="#55803a"/><circle cx="5" cy="20.5" r="1.4" fill="#a9c58f"/><circle cx="9.5" cy="27.5" r="1" fill="#9ab884"/><path d="M-2 38 L5.8 33.2 L14.8 27 L22 41 L22 46 L-2 46Z" fill="#3f5788"/><path d="M30.5 31.5 L36 33.8 L41 38 L41 46 L26 46 L30 37.8Z" fill="#34496f"/><path d="M14.8 27 L20 30 L28.7 29.4 L30.8 31.6 L30.2 37.8 L26 46 L22 46 L22 41Z" fill="#e6e6f2"/><path d="M17 26 L26.5 26 L27.8 31 L24.5 35.5 L20 31Z" fill="#b48672"/><ellipse cx="12.9" cy="18" rx="1.3" ry="2.6" fill="#d9a891"/><ellipse cx="30" cy="17.5" rx="1.2" ry="2.5" fill="#c99882"/><ellipse cx="21.4" cy="17.3" rx="8.2" ry="11.6" fill="#dcb09e"/><ellipse cx="21" cy="11.5" rx="6" ry="4" fill="#ecd0c5"/><ellipse cx="21.5" cy="26.3" rx="5.2" ry="2.6" fill="#c19582"/><path d="M13.2 15.5 C12.5 8 16 5 21.5 5 C27 5 30.5 8 29.7 15.5 C29 11.5 27.5 8.6 21.5 8.3 C15.5 8.6 14 11.5 13.2 15.5Z" fill="#7a5c4a"/><ellipse cx="18" cy="16" rx="1.7" ry="0.7" fill="#6b4a3d"/><ellipse cx="25" cy="16" rx="1.7" ry="0.7" fill="#6b4a3d"/><path d="M17.5 22.1 Q21.5 25.6 25.6 22.1 Q21.5 23.4 17.5 22.1Z" fill="#8a4f45"/><path d="M18.6 22.6 Q21.5 24.4 24.5 22.6 Q21.5 23.2 18.6 22.6Z" fill="#f3ecec"/></g></g></svg>
<div style="left:2951px;top:106px;width:6px;height:6px;background:#5f6368;border-radius:50%;"></div>
<div style="left:2951px;top:117px;width:6px;height:6px;background:#5f6368;border-radius:50%;"></div>
<div style="left:2951px;top:128px;width:6px;height:6px;background:#5f6368;border-radius:50%;"></div>
<svg style="left:1216px;top:178px;" width="32" height="32" viewBox="0 0 32 32"><path d="M29 12 V3.5 H3.5 V29 H12" stroke="#c7c7c7" stroke-width="3" fill="none" stroke-dasharray="3.2 3.2"/><path d="M29.5 29.5 L16.5 16.5 M16 27 V16 H27" stroke="#c7c7c7" stroke-width="3" fill="none"/></svg>
<svg style="left:1270px;top:180px;" width="36" height="28" viewBox="0 0 36 28"><path d="M31 3.5 H7.5 V23" stroke="#c7c7c7" stroke-width="3" fill="none"/><path d="M2 24.5 H17.5" stroke="#c7c7c7" stroke-width="3.4"/><rect x="22.5" y="9.5" width="10" height="15.5" rx="1.5" stroke="#c7c7c7" stroke-width="3" fill="none"/></svg>
<svg style="left:2588px;top:182px;" width="28" height="24" viewBox="0 0 28 24"><path d="M3 3 L12 12 L3 21 M15 3 L24 12 L15 21" stroke="#9e9e9e" stroke-width="2.6" fill="none"/></svg>
<svg style="left:2753px;top:184px;" width="24" height="24" viewBox="0 0 24 24"><circle cx="12" cy="12" r="11.2" fill="#df6f64"/><path d="M7.2 7.2 L16.8 16.8 M16.8 7.2 L7.2 16.8" stroke="#3c3c3c" stroke-width="2"/></svg>
<svg style="left:2838px;top:178px;" width="32" height="32" viewBox="0 0 32 32"><g fill="none" stroke="#c7c7c7" stroke-width="2.7" stroke-linejoin="round"><path d="M13.1 2.5 h5.8 l0.9 4 a9.5 9.5 0 0 1 2.6 1.5 l3.9 -1.2 2.9 5 -3 2.8 a9.5 9.5 0 0 1 0 3 l3 2.8 -2.9 5 -3.9 -1.2 a9.5 9.5 0 0 1 -2.6 1.5 l-0.9 4 h-5.8 l-0.9 -4 a9.5 9.5 0 0 1 -2.6 -1.5 l-3.9 1.2 -2.9 -5 3 -2.8 a9.5 9.5 0 0 1 0 -3 l-3 -2.8 2.9 -5 3.9 1.2 a9.5 9.5 0 0 1 2.6 -1.5z"/></g><circle cx="16" cy="16" r="5" fill="#c7c7c7"/></svg>
<svg style="left:2946px;top:232px;" width="32" height="32" viewBox="0 0 32 32"><g fill="none" stroke="#c7c7c7" stroke-width="2.7" stroke-linejoin="round"><path d="M13.1 2.5 h5.8 l0.9 4 a9.5 9.5 0 0 1 2.6 1.5 l3.9 -1.2 2.9 5 -3 2.8 a9.5 9.5 0 0 1 0 3 l3 2.8 -2.9 5 -3.9 -1.2 a9.5 9.5 0 0 1 -2.6 1.5 l-0.9 4 h-5.8 l-0.9 -4 a9.5 9.5 0 0 1 -2.6 -1.5 l-3.9 1.2 -2.9 -5 3 -2.8 a9.5 9.5 0 0 1 0 -3 l-3 -2.8 2.9 -5 3.9 1.2 a9.5 9.5 0 0 1 2.6 -1.5z"/></g><circle cx="16" cy="16" r="5" fill="#c7c7c7"/></svg>
<svg style="left:2946px;top:1656.5px;" width="32" height="32" viewBox="0 0 32 32"><g fill="none" stroke="#c7c7c7" stroke-width="2.7" stroke-linejoin="round"><path d="M13.1 2.5 h5.8 l0.9 4 a9.5 9.5 0 0 1 2.6 1.5 l3.9 -1.2 2.9 5 -3 2.8 a9.5 9.5 0 0 1 0 3 l3 2.8 -2.9 5 -3.9 -1.2 a9.5 9.5 0 0 1 -2.6 1.5 l-0.9 4 h-5.8 l-0.9 -4 a9.5 9.5 0 0 1 -2.6 -1.5 l-3.9 1.2 -2.9 -5 3 -2.8 a9.5 9.5 0 0 1 0 -3 l-3 -2.8 2.9 -5 3.9 1.2 a9.5 9.5 0 0 1 2.6 -1.5z"/></g><circle cx="16" cy="16" r="5" fill="#c7c7c7"/></svg>
<div style="left:2907px;top:181.9px;width:6px;height:6px;background:#c7c7c7;border-radius:50%;"></div>
<div style="left:2907px;top:191px;width:6px;height:6px;background:#c7c7c7;border-radius:50%;"></div>
<div style="left:2907px;top:200.1px;width:6px;height:6px;background:#c7c7c7;border-radius:50%;"></div>
<div style="left:1229px;top:1606.4px;width:6px;height:6px;background:#c7c7c7;border-radius:50%;"></div>
<div style="left:1229px;top:1615.5px;width:6px;height:6px;background:#c7c7c7;border-radius:50%;"></div>
<div style="left:1229px;top:1624.6px;width:6px;height:6px;background:#c7c7c7;border-radius:50%;"></div>
<svg style="left:2951px;top:183px;" width="22" height="22" viewBox="0 0 22 22"><path d="M2 2 L20 20 M20 2 L2 20" stroke="#c7c7c7" stroke-width="2.6" fill="none"/></svg>
<svg style="left:2955px;top:1607px;" width="22" height="22" viewBox="0 0 22 22"><path d="M2 2 L20 20 M20 2 L2 20" stroke="#c7c7c7" stroke-width="2.6" fill="none"/></svg>
<svg style="left:1216px;top:232px;" width="32" height="32" viewBox="0 0 32 32"><circle cx="16" cy="16" r="13.4" fill="none" stroke="#e46962" stroke-width="3"/><rect x="10" y="10" width="12" height="12" rx="1" fill="#e46962"/></svg>
<svg style="left:1272px;top:232px;" width="32" height="32" viewBox="0 0 32 32"><circle cx="16" cy="16" r="13.4" fill="none" stroke="#c7c7c7" stroke-width="3"/><path d="M6.6 25.4 L25.4 6.6" stroke="#c7c7c7" stroke-width="3"/></svg>
<svg style="left:1272px;top:1656.5px;" width="32" height="32" viewBox="0 0 32 32"><circle cx="16" cy="16" r="13.4" fill="none" stroke="#c7c7c7" stroke-width="3"/><path d="M6.6 25.4 L25.4 6.6" stroke="#c7c7c7" stroke-width="3"/></svg>
<svg style="left:1348px;top:234px;" width="28" height="28" viewBox="0 0 28 28"><path d="M1.5 2 H26.5 L16.3 14.5 V24.5 a1.5 1.5 0 0 1 -1.5 1.5 h-1.6 a1.5 1.5 0 0 1 -1.5 -1.5 V14.5Z" fill="#7cacf8"/></svg>
<svg style="left:1400px;top:232px;" width="34" height="34" viewBox="0 0 34 34"><circle cx="13" cy="12" r="8.3" fill="none" stroke="#c7c7c7" stroke-width="3"/><path d="M19 18 L31 30" stroke="#c7c7c7" stroke-width="3"/></svg>
<svg style="left:2085.7px;top:241.5px;" width="16" height="11" viewBox="0 0 16 11"><path d="M0 0 H16 L8.0 11Z" fill="#c7c7c7"/></svg>
<svg style="left:1397.5px;top:1666.5px;" width="16" height="11" viewBox="0 0 16 11"><path d="M0 0 H16 L8.0 11Z" fill="#c7c7c7"/></svg>
<svg style="left:2729.0px;top:1666.5px;" width="16" height="11" viewBox="0 0 16 11"><path d="M0 0 H16 L8.0 11Z" fill="#c7c7c7"/></svg>
<svg style="left:2130px;top:232px;" width="38" height="30" viewBox="0 0 38 30"><path d="M2.3 9.6 A22.5 22.5 0 0 1 34.1 9.6" stroke="#c7c7c7" stroke-width="3.2" fill="none"/><path d="M8.4 15.1 A14.2 14.2 0 0 1 26.4 13.5" stroke="#c7c7c7" stroke-width="3.2" fill="none"/><path d="M13.6 21 L18.6 18.1 V24.6Z" fill="#c7c7c7"/><circle cx="27.5" cy="22.5" r="3.6" fill="none" stroke="#c7c7c7" stroke-width="3"/><g stroke="#c7c7c7" stroke-width="2.6"><path d="M27.5 15.8 V18 M27.5 27 V29.2 M21.7 19.2 L23.6 20.3 M31.4 24.7 L33.3 25.8 M21.7 25.8 L23.6 24.7 M31.4 20.3 L33.3 19.2"/></g></svg>
<svg style="left:2208px;top:232px;" width="28" height="30" viewBox="0 0 28 30"><path d="M14.1 22 V4.5 M7 11.3 L14.1 3.9 L21.2 11.3" stroke="#c7c7c7" stroke-width="3" fill="none"/><path d="M3.5 21.5 V25 a1.8 1.8 0 0 0 1.8 1.8 H22.7 a1.8 1.8 0 0 0 1.8 -1.8 V21.5" stroke="#c7c7c7" stroke-width="3" fill="none"/></svg>
<svg style="left:2264px;top:232px;" width="28" height="30" viewBox="0 0 28 30"><path d="M14.1 2 V20 M7 13.2 L14.1 20.6 L21.2 13.2" stroke="#c7c7c7" stroke-width="3" fill="none"/><path d="M3.5 21.5 V25 a1.8 1.8 0 0 0 1.8 1.8 H22.7 a1.8 1.8 0 0 0 1.8 -1.8 V21.5" stroke="#c7c7c7" stroke-width="3" fill="none"/></svg>
<svg style="left:1217px;top:1657.5px;" width="30" height="30" viewBox="0 0 30 30"><rect x="1.5" y="1.5" width="27" height="27" rx="3" fill="none" stroke="#c7c7c7" stroke-width="3"/><path d="M9 2 V28" stroke="#c7c7c7" stroke-width="3"/><path d="M14 9 L21.5 15 L14 21Z" fill="#c7c7c7"/></svg>
<svg style="left:1452px;top:1658.5px;" width="38" height="28" viewBox="0 0 38 28"><path d="M2 14 C8 3 30 3 36 14 C30 25 8 25 2 14Z" fill="none" stroke="#c7c7c7" stroke-width="3"/><circle cx="19" cy="14" r="5.4" fill="none" stroke="#c7c7c7" stroke-width="3"/></svg>
<svg style="left:1224.6px;top:1714.6px;" width="23" height="23" viewBox="0 0 23 23"><circle cx="11.5" cy="11.5" r="11.2" fill="#df6f64"/><path d="M7 7 L16 16 M16 7 L7 16" stroke="#4b3433" stroke-width="2"/></svg>
</div></body></html>
